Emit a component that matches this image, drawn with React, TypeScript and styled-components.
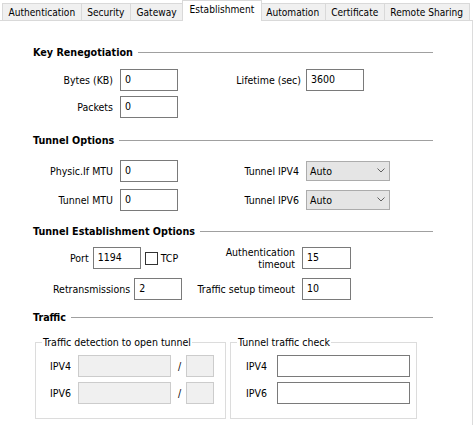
import React from "react";
import styled, { createGlobalStyle } from "styled-components";

const GlobalStyle = createGlobalStyle`
  html, body {
    margin: 0;
    padding: 0;
    background: #ffffff;
  }
  body {
    font-family: "DejaVu Sans Condensed", "DejaVu Sans", sans-serif;
    font-size: 10.5px;
    color: #000000;
  }
`;

const Window = styled.div`
  width: 474px;
  height: 425px;
  display: flex;
  flex-direction: column;
  overflow: hidden;
  background: #ffffff;
`;

const TabStrip = styled.div`
  display: flex;
  align-items: flex-end;
  height: 21px;
  padding-left: 2px;
  position: relative;
  z-index: 1;
  font-size: 10.1px;
`;

const Tab = styled.div<{ $active?: boolean }>`
  box-sizing: border-box;
  height: ${(p) => (p.$active ? 21 : 18)}px;
  padding: ${(p) => (p.$active ? "0 6.5px 3px" : "0 5.5px")};
  margin: ${(p) => (p.$active ? "0 -1px" : "0")};
  display: flex;
  align-items: center;
  border: 1px solid #d9d9d9;
  border-bottom: ${(p) => (p.$active ? "none" : "1px solid #d9d9d9")};
  border-left: ${(p) => (p.$active ? "1px solid #d9d9d9" : "none")};
  background: ${(p) => (p.$active ? "#ffffff" : "#f0f0f0")};
  white-space: nowrap;
  position: relative;
  z-index: ${(p) => (p.$active ? 2 : 1)};

  &:first-child {
    border-left: 1px solid #d9d9d9;
  }
`;

const Panel = styled.div`
  flex: 1;
  margin-top: -1px;
  width: 473px;
  box-sizing: border-box;
  border-top: 1px solid #d9d9d9;
  border-right: 1px solid #dcdcdc;
  padding: 0 39px 0 33px;
  display: flex;
  flex-direction: column;
`;

const SectionTitle = styled.div<{ $top: number }>`
  display: flex;
  align-items: center;
  gap: 5px;
  height: 14px;
  margin-top: ${(p) => p.$top}px;
  font-size: 10.7px;
  font-weight: bold;
  white-space: nowrap;

  &::after {
    content: "";
    flex: 1;
    border-top: 1px solid #a0a0a0;
  }
`;

const FieldGrid = styled.div<{ $cols: string; $top: number; $gap: number }>`
  display: grid;
  grid-template-columns: ${(p) => p.$cols};
  grid-auto-rows: 22px;
  row-gap: ${(p) => p.$gap}px;
  align-items: center;
  margin-top: ${(p) => p.$top}px;
`;

const Label = styled.div<{ $pad?: number }>`
  text-align: right;
  padding-right: ${(p) => p.$pad ?? 7}px;
  white-space: nowrap;
  line-height: 12px;
`;

const Cell = styled.div<{ $indent?: number; $gap?: number }>`
  display: flex;
  align-items: center;
  gap: ${(p) => p.$gap ?? 0}px;
  padding-left: ${(p) => p.$indent ?? 0}px;
  white-space: nowrap;
`;

const RightLabel = styled.div`
  width: 105px;
  text-align: right;
  line-height: 12px;
  margin-right: 7px;
`;

const TextBox = styled.input<{ $w: number }>`
  box-sizing: border-box;
  width: ${(p) => p.$w}px;
  height: 22px;
  margin: 0;
  padding: 0 4px 2px;
  border: 1px solid #7a7a7a;
  border-radius: 0;
  background: #ffffff;
  font: inherit;
  color: #000000;
  outline: none;

  &:disabled {
    background: #f0f0f0;
    border-color: #cccccc;
  }
`;

const Combo = styled.div`
  box-sizing: border-box;
  width: 84px;
  height: 20px;
  display: flex;
  align-items: center;
  justify-content: space-between;
  padding: 0 4px 1px 3px;
  background: #e5e5e5;
  border: 1px solid #acacac;
`;

const CheckBox = styled.span`
  box-sizing: border-box;
  width: 13px;
  height: 13px;
  border: 1px solid #333333;
  background: #ffffff;
`;

const GroupRow = styled.div`
  display: flex;
  gap: 4px;
  margin: 12px 0 0 2px;
`;

const Group = styled.fieldset<{ $w: number }>`
  box-sizing: border-box;
  width: ${(p) => p.$w}px;
  height: 83px;
  margin: 0;
  padding: 7px 0 0;
  border: 1px solid #dcdcdc;
  border-radius: 0;
  min-width: 0;
`;

const Legend = styled.legend`
  margin-left: 6px;
  padding: 0 1px;
  line-height: 12px;
`;

const GroupGrid = styled.div<{ $cols: string; $indent: number }>`
  display: grid;
  grid-template-columns: ${(p) => p.$cols};
  grid-auto-rows: 22px;
  row-gap: 5px;
  align-items: center;
  padding-left: ${(p) => p.$indent}px;
`;

const Slash = styled.div`
  text-align: center;
  padding-left: 2px;
`;

const Chevron = () => (
  <svg width="8" height="5" viewBox="0 0 8 5">
    <path d="M0.5 0.5 L4 4 L7.5 0.5" fill="none" stroke="#606060" strokeWidth="1" />
  </svg>
);

const tabs = [
  "Authentication",
  "Security",
  "Gateway",
  "Establishment",
  "Automation",
  "Certificate",
  "Remote Sharing",
];

function App() {
  return (
    <>
      <GlobalStyle />
      <Window>
        <TabStrip>
          {tabs.map((t) => (
            <Tab key={t} $active={t === "Establishment"}>
              {t}
            </Tab>
          ))}
        </TabStrip>
        <Panel>
          <SectionTitle $top={24}>Key Renegotiation</SectionTitle>
          <FieldGrid $cols="87px 58px 128px 58px" $top={10} $gap={5}>
            <Label>Bytes (KB)</Label>
            <TextBox $w={58} defaultValue="0" />
            <Label $pad={5}>Lifetime (sec)</Label>
            <TextBox $w={58} defaultValue="3600" />
            <Label>Packets</Label>
            <TextBox $w={58} defaultValue="0" />
          </FieldGrid>

          <SectionTitle $top={15}>Tunnel Options</SectionTitle>
          <FieldGrid $cols="87px 58px 128px 84px" $top={13} $gap={7}>
            <Label>Physic.If MTU</Label>
            <TextBox $w={58} defaultValue="0" />
            <Label>Tunnel IPV4</Label>
            <Combo>
              <span>Auto</span>
              <Chevron />
            </Combo>
            <Label>Tunnel MTU</Label>
            <TextBox $w={58} defaultValue="0" />
            <Label>Tunnel IPV6</Label>
            <Combo>
              <span>Auto</span>
              <Chevron />
            </Combo>
          </FieldGrid>

          <SectionTitle $top={13}>Tunnel Establishment Options</SectionTitle>
          <FieldGrid $cols="157px 1fr" $top={9} $gap={9}>
            <Cell $indent={37} $gap={4}>
              <span>Port</span>
              <TextBox $w={48} defaultValue="1194" />
              <CheckBox />
              <span style={{ marginLeft: -1 }}>TCP</span>
            </Cell>
            <Cell>
              <RightLabel>
                Authentication
                <br />
                timeout
              </RightLabel>
              <TextBox $w={49} defaultValue="15" />
            </Cell>
            <Cell $indent={20} $gap={4}>
              <span>Retransmissions</span>
              <TextBox $w={48} defaultValue="2" />
            </Cell>
            <Cell>
              <RightLabel>Traffic setup timeout</RightLabel>
              <TextBox $w={49} defaultValue="10" />
            </Cell>
          </FieldGrid>

          <SectionTitle $top={10}>Traffic</SectionTitle>
          <GroupRow>
            <Group $w={191}>
              <Legend>Traffic detection to open tunnel</Legend>
              <GroupGrid $cols="28px 93px 15px 28px" $indent={14}>
                <span>IPV4</span>
                <TextBox $w={93} disabled />
                <Slash>/</Slash>
                <TextBox $w={28} disabled />
                <span>IPV6</span>
                <TextBox $w={93} disabled />
                <Slash>/</Slash>
                <TextBox $w={28} disabled />
              </GroupGrid>
            </Group>
            <Group $w={187}>
              <Legend>Tunnel traffic check</Legend>
              <GroupGrid $cols="31px 133px" $indent={15}>
                <span>IPV4</span>
                <TextBox $w={133} />
                <span>IPV6</span>
                <TextBox $w={133} />
              </GroupGrid>
            </Group>
          </GroupRow>
        </Panel>
      </Window>
    </>
  );
}

export default App;
